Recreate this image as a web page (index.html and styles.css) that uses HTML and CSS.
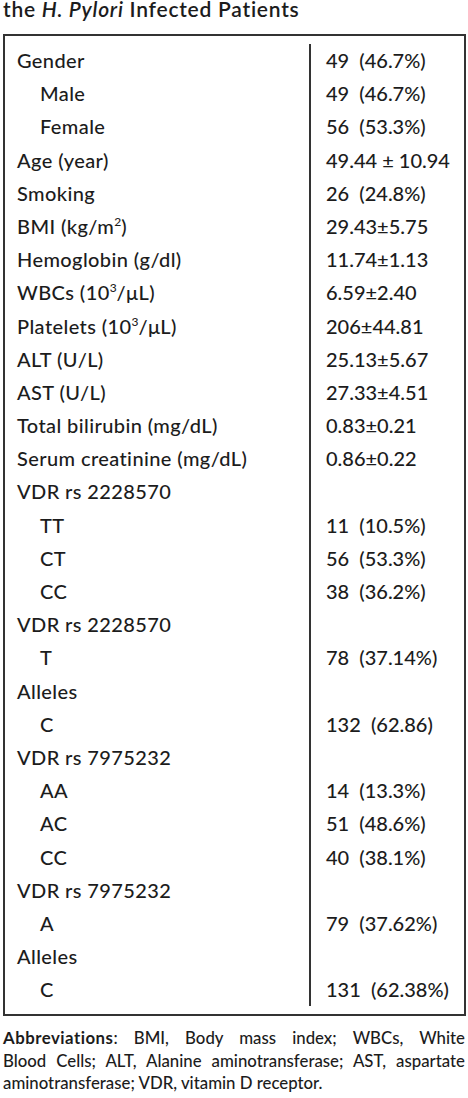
FILE: index.html
```html
<!DOCTYPE html>
<html>
<head>
<meta charset="utf-8">
<link rel="stylesheet" href="styles.css">
</head>
<body>
<div class="page">
  <h2 class="title">the <i>H. Pylori</i> Infected Patients</h2>
  <div class="box">
    <div class="grid">
      <div class="lab">Gender</div><div class="val">49&nbsp; (46.7%)</div>
      <div class="lab sub">Male</div><div class="val">49&nbsp; (46.7%)</div>
      <div class="lab sub">Female</div><div class="val">56&nbsp; (53.3%)</div>
      <div class="lab">Age (year)</div><div class="val">49.44 ± 10.94</div>
      <div class="lab">Smoking</div><div class="val">26&nbsp; (24.8%)</div>
      <div class="lab">BMI (kg/m<sup>2</sup>)</div><div class="val">29.43±5.75</div>
      <div class="lab">Hemoglobin (g/dl)</div><div class="val">11.74±1.13</div>
      <div class="lab">WBCs (10<sup>3</sup>/μL)</div><div class="val">6.59±2.40</div>
      <div class="lab">Platelets (10<sup>3</sup>/μL)</div><div class="val">206±44.81</div>
      <div class="lab">ALT (U/L)</div><div class="val">25.13±5.67</div>
      <div class="lab">AST (U/L)</div><div class="val">27.33±4.51</div>
      <div class="lab">Total bilirubin (mg/dL)</div><div class="val">0.83±0.21</div>
      <div class="lab">Serum creatinine (mg/dL)</div><div class="val">0.86±0.22</div>
      <div class="lab">VDR rs 2228570</div><div class="val"></div>
      <div class="lab sub">TT</div><div class="val">11&nbsp; (10.5%)</div>
      <div class="lab sub">CT</div><div class="val">56&nbsp; (53.3%)</div>
      <div class="lab sub">CC</div><div class="val">38&nbsp; (36.2%)</div>
      <div class="lab">VDR rs 2228570</div><div class="val"></div>
      <div class="lab sub">T</div><div class="val">78&nbsp; (37.14%)</div>
      <div class="lab">Alleles</div><div class="val"></div>
      <div class="lab sub">C</div><div class="val">132&nbsp; (62.86)</div>
      <div class="lab">VDR rs 7975232</div><div class="val"></div>
      <div class="lab sub">AA</div><div class="val">14&nbsp; (13.3%)</div>
      <div class="lab sub">AC</div><div class="val">51&nbsp; (48.6%)</div>
      <div class="lab sub">CC</div><div class="val">40&nbsp; (38.1%)</div>
      <div class="lab">VDR rs 7975232</div><div class="val"></div>
      <div class="lab sub">A</div><div class="val">79&nbsp; (37.62%)</div>
      <div class="lab">Alleles</div><div class="val"></div>
      <div class="lab sub">C</div><div class="val">131&nbsp; (62.38%)</div>
    </div>
  </div>
  <div class="note">
    <span class="line full"><b>Abbreviations</b>: BMI, Body mass index; WBCs, White</span>
    <span class="line full">Blood Cells; ALT, Alanine aminotransferase; AST, aspartate</span>
    <span class="line">aminotransferase; VDR, vitamin D receptor.</span>
  </div>
</div>
</body>
</html>
```

FILE: styles.css
```css
html, body {
  margin: 0;
  padding: 0;
  background: #ffffff;
}
.page {
  width: 468px;
  color: #1c1c1c;
  font-family: Lato, "Open Sans", sans-serif;
}
.title {
  margin: 0;
  padding: 0 0 0 3px;
  font-size: 21px;
  font-weight: 600;
  letter-spacing: 0.75px;
  line-height: 18px;
  height: 34px;
}
.title i {
  font-style: italic;
}
.box {
  margin-left: 3px;
  width: 459px;
  border: 2px solid #333;
  padding: 8px 0;
}
.grid {
  display: grid;
  grid-template-columns: 306px 1fr;
  grid-auto-rows: 33.2px;
}
.lab, .val {
  font-size: 20px;
  font-weight: 500;
  line-height: 33.2px;
  white-space: nowrap;
}
.lab {
  padding-left: 12px;
  letter-spacing: 0.4px;
  border-right: 2px solid #333;
}
.lab.sub {
  padding-left: 35px;
}
.val {
  padding-left: 15px;
}
sup {
  font-size: 12px;
  line-height: 0;
  vertical-align: 8px;
  letter-spacing: 0;
}
.note {
  margin: 11px 0 0 3px;
  width: 462px;
  font-size: 16.8px;
  font-weight: 500;
  line-height: 22.5px;
}
.line {
  display: block;
  white-space: nowrap;
}
.line.full {
  text-align: justify;
  text-align-last: justify;
  white-space: normal;
}
.note b {
  font-weight: 700;
  letter-spacing: 0.5px;
}
```
